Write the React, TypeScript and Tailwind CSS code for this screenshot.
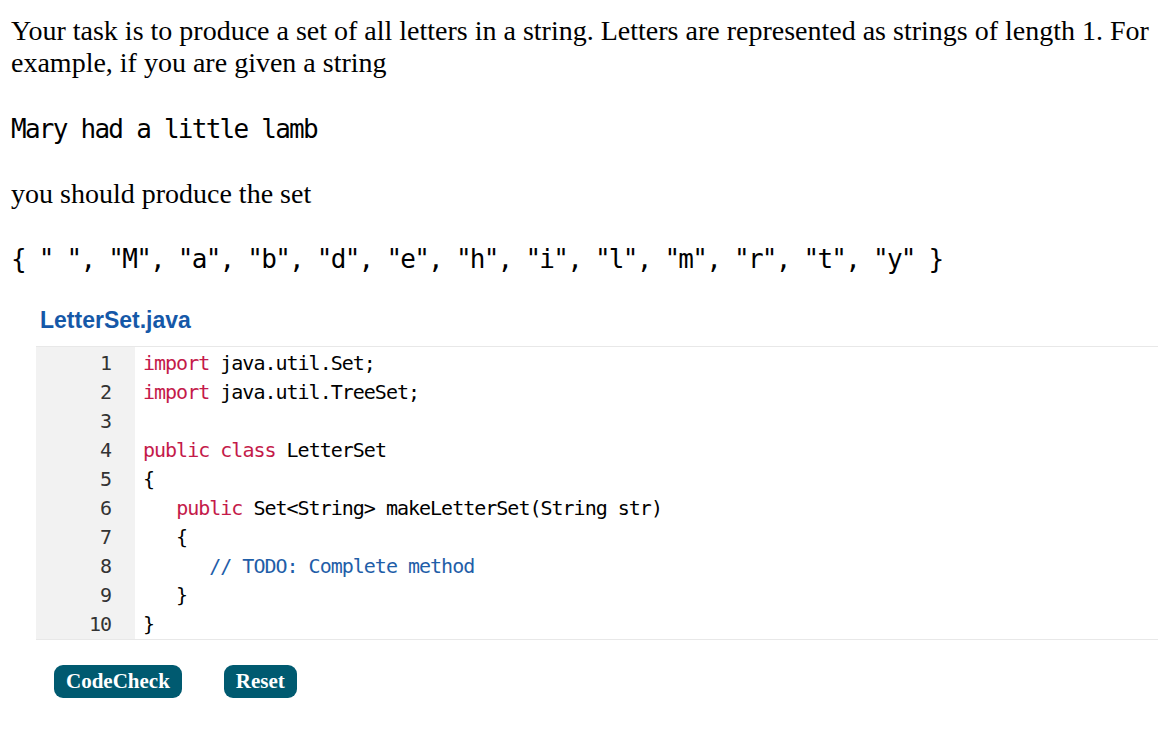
const serif = "font-['Liberation_Serif','Times_New_Roman',serif]";
const mono = "font-['DejaVu_Sans_Mono',monospace]";

type Tok = { t: string; c?: "kw" | "cm" };

const code: Tok[][] = [
  [{ t: "import", c: "kw" }, { t: " java.util.Set;" }],
  [{ t: "import", c: "kw" }, { t: " java.util.TreeSet;" }],
  [],
  [{ t: "public", c: "kw" }, { t: " " }, { t: "class", c: "kw" }, { t: " LetterSet" }],
  [{ t: "{" }],
  [{ t: "   " }, { t: "public", c: "kw" }, { t: " Set<String> makeLetterSet(String str)" }],
  [{ t: "   {" }],
  [{ t: "      " }, { t: "// TODO: Complete method", c: "cm" }],
  [{ t: "   }" }],
  [{ t: "}" }],
];

const tokColor = (c?: "kw" | "cm") =>
  c === "kw" ? "text-[#c41a4a]" : c === "cm" ? "text-[#1f5ea8]" : "text-black";

export default function App() {
  return (
    <div className="min-h-screen bg-white px-[11px] pt-[15px] text-black">
      <p className={`${serif} whitespace-nowrap text-[28px] leading-[32px]`}>
        Your task is to produce a set of all letters in a string. Letters are represented as strings of length 1. For
        <br />
        example, if you are given a string
      </p>
      <pre className={`${mono} mt-[35px] text-[26px] leading-[30px] tracking-[-1.75px]`}>Mary had a little lamb</pre>
      <p className={`${serif} mt-[34px] text-[28px] leading-[32px]`}>you should produce the set</p>
      <pre className={`${mono} mt-[34px] text-[26px] leading-[30px] tracking-[-1.75px]`}>
        {'{ " ", "M", "a", "b", "d", "e", "h", "i", "l", "m", "r", "t", "y" }'}
      </pre>

      <div className="ml-[25px] mt-[32px]">
        <div className="ml-[4px] font-['Liberation_Sans',Arial,sans-serif] text-[23px] font-bold leading-[28px] text-[#1558a8]">
          LetterSet.java
        </div>
        <div className="mt-[12px] mr-[-11px] flex border-y border-[#e8e8e8]">
          <div className={`${mono} w-[99px] shrink-0 bg-[#f2f2f2] pr-[24px] pt-[2px] text-right text-[20px] leading-[29px] tracking-[-1px] text-[#333]`}>
            {code.map((_, i) => (
              <div key={i}>{i + 1}</div>
            ))}
          </div>
          <div className={`${mono} pl-[8px] pt-[2px] text-[20px] leading-[29px] tracking-[-1px]`}>
            {code.map((line, i) => (
              <div key={i} className="h-[29px] whitespace-pre">
                {line.map((tok, j) => (
                  <span key={j} className={tokColor(tok.c)}>
                    {tok.t}
                  </span>
                ))}
              </div>
            ))}
          </div>
        </div>
        <div className="mt-[25px] flex gap-[42px] pl-[18px]">
          <button className={`${serif} h-[33px] rounded-[9px] bg-[#005a70] px-[12px] text-[21px] font-bold text-white`}>
            CodeCheck
          </button>
          <button className={`${serif} h-[33px] rounded-[9px] bg-[#005a70] px-[12px] text-[21px] font-bold text-white`}>
            Reset
          </button>
        </div>
      </div>
    </div>
  );
}
